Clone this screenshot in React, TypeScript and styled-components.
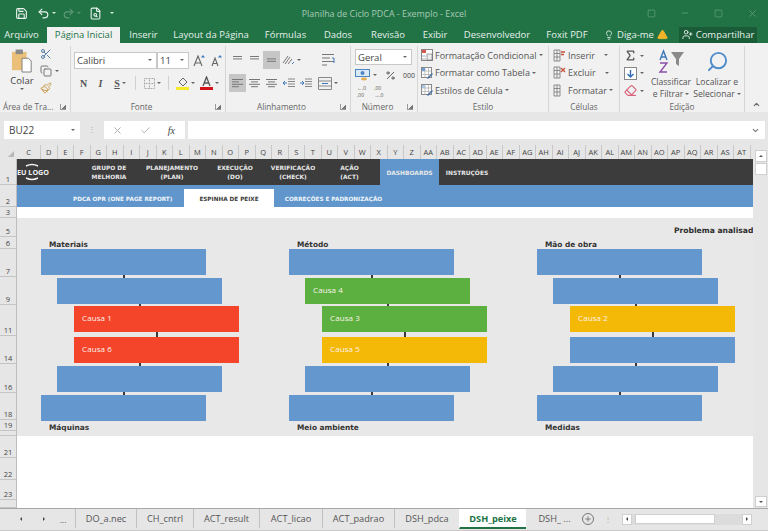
import styled, { createGlobalStyle } from 'styled-components';
import {
  Save, Undo2, Redo2, FileSearch, Scissors, Copy, Paintbrush, ChevronDown, ChevronUp, Lightbulb,
  TriangleAlert, UserPlus, Sigma, Eraser, Search, Check, X, Minus, Square, Plus, Percent,
} from 'lucide-react';

const GlobalStyle = createGlobalStyle`
  html, body { margin: 0; padding: 0; }
  body { font-family: "Open Sans", "Liberation Sans", sans-serif; overflow: hidden; }
`;

const Page = styled.div`
  width: 768px;
  height: 531px;
  display: flex;
  flex-direction: column;
  overflow: hidden;
  background: #e6e6e6;
`;

/* title bar */
const TitleBar = styled.div`
  height: 27px;
  background: #217346;
  display: flex;
  align-items: center;
  position: relative;
  padding-left: 15px;
  color: #eaf3ed;
`;
const QuickIcon = styled.span<{ $w?: number; $dim?: boolean; $ml?: number }>`
  width: ${(p) => p.$w ?? 26}px;
  margin-left: ${(p) => p.$ml ?? 0}px;
  display: flex;
  align-items: center;
  gap: 2px;
  opacity: ${(p) => (p.$dim ? 0.3 : 1)};
`;
const Caret = styled.span<{ $color?: string; $ml?: number }>`
  width: 0;
  height: 0;
  margin-left: ${(p) => p.$ml ?? 0}px;
  border-left: 2px solid transparent;
  border-right: 2px solid transparent;
  border-top: 2px solid ${(p) => p.$color ?? '#666'};
  display: inline-block;
  flex: none;
`;
const Title = styled.div`
  position: absolute;
  left: 0;
  right: 0;
  top: 7px;
  text-align: center;
  font-size: 8.9px;
  line-height: 13px;
  color: #a8c9b5;
`;
const WindowControls = styled.div`
  margin-left: auto;
  display: flex;
  align-items: center;
  color: #5f9d7b;
  gap: 24px;
  padding-right: 10px;
`;

/* ribbon tabs */
const TabRow = styled.div`
  height: 17px;
  background: #217346;
  display: flex;
  align-items: stretch;
  font-size: 9.5px;
  color: #e6f0ea;
  padding-left: 6px;
  white-space: nowrap;
`;
const RibbonTab = styled.div<{ $w: number; $active?: boolean; $ml?: number }>`
  width: ${(p) => p.$w}px;
  margin-left: ${(p) => p.$ml ?? 0}px;
  display: flex;
  align-items: center;
  justify-content: center;
  flex: none;
  background: ${(p) => (p.$active ? '#f1f1f1' : 'transparent')};
  color: ${(p) => (p.$active ? '#217346' : 'inherit')};
`;
const TellMe = styled.div`
  width: 66px;
  flex: none;
  display: flex;
  align-items: center;
  gap: 3px;
  margin-left: 10px;
`;
const Share = styled.div`
  width: 78px;
  margin-left: 9px;
  display: flex;
  align-items: center;
  justify-content: center;
  gap: 3px;
  background: #1a5c38;
`;

/* ribbon */
const Ribbon = styled.div`
  height: 69px;
  background: #f1f1f1;
  display: flex;
  font-size: 9.2px;
  color: #444;
`;
const Group = styled.div<{ $w: number }>`
  width: ${(p) => p.$w}px;
  box-sizing: border-box;
  flex: none;
  display: flex;
  flex-direction: column;
  position: relative;
  margin-top: 3px;
  border-right: 1px solid #d6d6d6;
`;
const GroupBody = styled.div`
  flex: 1;
  display: flex;
  min-height: 0;
`;
const GroupLabel = styled.div<{ $left?: boolean; $launcher?: boolean }>`
  height: 12px;
  line-height: 14px;
  text-align: ${(p) => (p.$left ? 'left' : 'center')};
  padding-left: ${(p) => (p.$left ? 3 : 0)}px;
  padding-right: ${(p) => (p.$launcher ? 13 : 0)}px;
  font-size: 8.2px;
  color: #666;
  white-space: nowrap;
`;
const Launcher = styled.span`
  position: absolute;
  right: 4px;
  bottom: 2px;
  width: 5px;
  height: 5px;
  border-left: 1px solid #999;
  border-bottom: 1px solid #999;
  background: linear-gradient(135deg, transparent 55%, #777 55%);
`;
const PasteBox = styled.div`
  width: 36px;
  flex: none;
  display: flex;
  flex-direction: column;
  align-items: center;
  padding: 3px 0 0 4px;
  font-size: 9.5px;
  line-height: 13px;
  gap: 1px;
`;
const ClipTools = styled.div`
  display: flex;
  flex-direction: column;
  gap: 5px;
  padding-top: 2px;
`;
const Stack = styled.div<{ $gap?: number; $top?: number; $left?: number; $w?: number }>`
  display: flex;
  flex-direction: column;
  flex: ${(p) => (p.$w ? 'none' : '0 1 auto')};
  width: ${(p) => (p.$w ? `${p.$w}px` : 'auto')};
  gap: ${(p) => p.$gap ?? 0}px;
  padding-top: ${(p) => p.$top ?? 0}px;
  padding-left: ${(p) => p.$left ?? 0}px;
  box-sizing: content-box;
`;
const Row = styled.div<{ $gap?: number; $h?: number; $mt?: number }>`
  display: flex;
  align-items: center;
  gap: ${(p) => p.$gap ?? 0}px;
  margin-top: ${(p) => p.$mt ?? 0}px;
  height: ${(p) => (p.$h ? `${p.$h}px` : 'auto')};
`;
const Select = styled.div<{ $w: number; $h?: number }>`
  width: ${(p) => p.$w}px;
  height: ${(p) => p.$h ?? 17}px;
  box-sizing: border-box;
  flex: none;
  background: #fff;
  border: 1px solid #c8c8c8;
  display: flex;
  align-items: center;
  justify-content: space-between;
  padding: 0 4px 0 2px;
  font-size: 9.5px;
  color: #444;
`;
const IconBtn = styled.div<{ $w?: number; $on?: boolean; $ml?: number }>`
  width: ${(p) => p.$w ?? 17}px;
  height: 18px;
  margin-left: ${(p) => p.$ml ?? 0}px;
  flex: none;
  display: flex;
  align-items: center;
  justify-content: center;
  gap: 2px;
  background: ${(p) => (p.$on ? '#c6c6c6' : 'transparent')};
  font-size: 9.5px;
  color: #555;
`;
const BoldLetter = styled.span<{ $italic?: boolean; $under?: boolean }>`
  font-family: "Liberation Serif", serif;
  font-weight: 700;
  font-size: 10px;
  font-style: ${(p) => (p.$italic ? 'italic' : 'normal')};
  text-decoration: ${(p) => (p.$under ? 'underline' : 'none')};
  color: #555;
`;
const ToolSep = styled.span`
  width: 1px;
  height: 14px;
  background: #d0d0d0;
  margin: 0 4px;
`;
const PercentIcon = styled(Percent)`
  margin-left: 5px;
`;
const Thousands = styled.span`
  font-size: 7px;
  margin-left: 4px;
`;
const DecimalRow = styled.div`
  height: 16px;
  display: flex;
  align-items: center;
  gap: 8px;
  padding-left: 2px;
`;
const Decimal = styled.span`
  display: flex;
  flex-direction: column;
  font-size: 5px;
  line-height: 7px;
  color: #555;
`;
const MenuLine = styled.div`
  display: flex;
  align-items: center;
  gap: 2px;
  height: 17.5px;
  white-space: nowrap;
  font-size: 9px;
  color: #555;
`;
const BigTool = styled.div<{ $w: number }>`
  width: ${(p) => p.$w}px;
  flex: none;
  display: flex;
  flex-direction: column;
  align-items: center;
  font-size: 8.6px;
  line-height: 12px;
  padding-top: 2px;
  white-space: nowrap;
  color: #555;
`;
const BigIcon = styled.div`
  height: 27px;
  display: flex;
  align-items: center;
  margin-bottom: 1px;
`;
const LoupeIcon = styled(Search)`
  transform: scaleX(-1);
`;
const Collapse = styled.div`
  flex: 1;
  display: flex;
  align-items: flex-end;
  justify-content: center;
  padding-bottom: 3px;
  color: #666;
`;

/* formula bar */
const FormulaBar = styled.div`
  height: 33px;
  box-sizing: border-box;
  display: flex;
  align-items: flex-start;
  padding: 9px 3px 0 4px;
  background: #e6e6e6;
  font-size: 10px;
  color: #444;
`;
const NameBox = styled.div`
  width: 76px;
  height: 18px;
  box-sizing: border-box;
  background: #fff;
  display: flex;
  align-items: center;
  justify-content: space-between;
  padding: 0 5px;
`;
const Dots = styled.div<{ $w: number }>`
  width: ${(p) => p.$w}px;
  flex: none;
  text-align: center;
  line-height: 16px;
  color: #aaa;
  font-size: 8px;
`;
const FxBox = styled.div`
  width: 81px;
  height: 18px;
  background: #fff;
  display: flex;
  align-items: center;
  justify-content: space-between;
  color: #aaa;
  padding: 0 10px 0 8px;
  box-sizing: border-box;
`;
const Fx = styled.i`
  font-family: "Liberation Serif", serif;
  color: #444;
  font-size: 10px;
`;
const FormulaInput = styled.div`
  flex: 1;
  height: 18px;
  background: #fff;
  margin-left: 3px;
  display: flex;
  align-items: center;
  justify-content: flex-end;
  padding-right: 5px;
  color: #777;
`;

/* grid */
const GridArea = styled.div`
  height: 363px;
  display: flex;
`;
const GridMain = styled.div`
  width: 753px;
  display: flex;
  flex-direction: column;
`;
const ColHeader = styled.div`
  height: 14px;
  display: flex;
  background: #e6e6e6;
  font-size: 7.5px;
  line-height: 15px;
  color: #444;
`;
const Corner = styled.div`
  width: 17px;
  flex: none;
  position: relative;
  &::after {
    content: '';
    position: absolute;
    right: 3px;
    bottom: 2px;
    border-left: 6px solid transparent;
    border-bottom: 6px solid #b8b8b8;
  }
`;
const ColCell = styled.div<{ $w: number }>`
  width: ${(p) => p.$w}px;
  flex: none;
  box-sizing: border-box;
  text-align: center;
  border-right: 1px solid #c8c8c8;
  overflow: hidden;
`;
const GridBody = styled.div`
  flex: 1;
  display: flex;
  min-height: 0;
`;
const RowHeader = styled.div`
  width: 17px;
  flex: none;
  background: #e6e6e6;
  border-right: 1px solid #bdbdbd;
  box-sizing: border-box;
`;
const RowCell = styled.div<{ $h: number }>`
  height: ${(p) => p.$h}px;
  box-sizing: border-box;
  border-bottom: 1px solid #c4c4c4;
  display: flex;
  align-items: flex-end;
  justify-content: center;
  font-size: 7.5px;
  line-height: 10px;
  color: #444;
  overflow: hidden;
`;
const Sheet = styled.div`
  flex: 1;
  min-width: 0;
  background: #fff;
  display: flex;
  flex-direction: column;
  overflow: hidden;
`;
const DarkNav = styled.div`
  height: 26px;
  flex: none;
  background: #3c3c3c;
  display: flex;
  font-family: "DejaVu Sans", sans-serif;
  font-weight: 700;
  font-size: 5.9px;
  line-height: 9px;
  color: #e8e8e8;
  text-align: center;
`;
const Logo = styled.div`
  width: 60px;
  flex: none;
  display: flex;
  flex-direction: column;
  align-items: flex-start;
  justify-content: center;
  font-family: "Open Sans", sans-serif;
  font-size: 7.2px;
  line-height: 10px;
  color: #f2f2f2;
  svg { margin-left: 8px; display: block; }
`;
const NavItem = styled.div<{ $w: number; $active?: boolean }>`
  width: ${(p) => p.$w}px;
  flex: none;
  box-sizing: border-box;
  padding-top: 2px;
  display: flex;
  align-items: center;
  justify-content: center;
  background: ${(p) => (p.$active ? '#6096cc' : 'transparent')};
`;
const SubNav = styled.div`
  height: 22px;
  flex: none;
  background: #6096cc;
  display: flex;
  align-items: flex-end;
  font-family: "DejaVu Sans", sans-serif;
  font-weight: 700;
  font-size: 5.7px;
  color: #eef4fa;
`;
const SubItem = styled.div<{ $w: number; $active?: boolean; $pad?: number }>`
  width: ${(p) => p.$w}px;
  flex: none;
  height: 18px;
  box-sizing: border-box;
  padding-top: 2px;
  display: flex;
  align-items: center;
  justify-content: ${(p) => (p.$pad ? 'flex-start' : 'center')};
  padding-left: ${(p) => p.$pad ?? 0}px;
  background: ${(p) => (p.$active ? '#fff' : 'transparent')};
  color: ${(p) => (p.$active ? '#3c3c3c' : 'inherit')};
  white-space: nowrap;
`;
const Spacer = styled.div<{ $h: number }>`
  height: ${(p) => p.$h}px;
  flex: none;
`;
const Panel = styled.div`
  height: 218px;
  flex: none;
  background: #e8e8e8;
  display: flex;
  flex-direction: column;
  font-family: "DejaVu Sans", sans-serif;
  font-weight: 700;
  font-size: 7.4px;
  color: #333;
`;
const Problem = styled.div`
  height: 19px;
  padding: 7px 0 0 657px;
  box-sizing: border-box;
  font-size: 7.6px;
  line-height: 11px;
  white-space: nowrap;
  color: #2e2e2e;
`;
const Fishbone = styled.div`
  display: grid;
  grid-template-columns: repeat(3, 248px);
  padding-left: 24px;
`;
const Branch = styled.div`
  display: flex;
  flex-direction: column;
`;
const BranchLabel = styled.div<{ $h: number; $lh: number }>`
  height: ${(p) => p.$h}px;
  line-height: ${(p) => p.$lh}px;
  padding-left: 8px;
`;
const Bars = styled.div`
  display: flex;
  flex-direction: column;
`;
const Bar = styled.div<{ $indent: number; $color: string; $link: 'up' | 'down' | 'none'; $space: number }>`
  position: relative;
  width: 165px;
  height: 26px;
  margin-left: ${(p) => p.$indent}px;
  margin-top: ${(p) => p.$space}px;
  background: ${(p) => p.$color};
  color: #fdf2ea;
  font-family: "Open Sans", sans-serif;
  font-weight: 400;
  font-size: 8px;
  letter-spacing: 0.1px;
  line-height: 24px;
  padding-left: 8px;
  box-sizing: border-box;
  &::after {
    content: '';
    display: ${(p) => (p.$link === 'none' ? 'none' : 'block')};
    position: absolute;
    left: 81.5px;
    width: 2px;
    height: ${(p) => (p.$space > 3 && p.$link === 'up' ? 5 : 3)}px;
    background: #3a3a3a;
    ${(p) => (p.$link === 'down' ? 'top: 26px;' : 'bottom: 26px;')}
  }
`;

/* vertical scrollbar */
const VScroll = styled.div`
  width: 15px;
  flex: none;
  background: #e6e6e6;
  display: flex;
  flex-direction: column;
  align-items: center;
  justify-content: space-between;
  padding: 5px 0 1px;
  box-sizing: border-box;
`;
const ScrollButton = styled.div<{ $w?: number; $h?: number; $end?: boolean }>`
  width: ${(p) => p.$w ?? 10}px;
  height: ${(p) => p.$h ?? 10}px;
  margin-left: ${(p) => (p.$end ? 'auto' : '0')};
  background: #fff;
  border: 1px solid #cfcfcf;
  box-sizing: border-box;
  display: flex;
  align-items: center;
  justify-content: center;
  flex: none;
`;
const Arrow = styled.span<{ $dir: 'up' | 'down' | 'left' | 'right' }>`
  width: 0;
  height: 0;
  border: 2.5px solid transparent;
  ${(p) =>
    p.$dir === 'up'
      ? 'border-bottom-color: #555; margin-top: -2px;'
      : p.$dir === 'down'
        ? 'border-top-color: #555; margin-top: 2px;'
        : p.$dir === 'left'
          ? 'border-right-color: #444; margin-left: -2px;'
          : 'border-left-color: #444; margin-left: 2px;'}
`;
const VThumb = styled.div`
  width: 12px;
  height: 12px;
  background: #fff;
  border: 1px solid #d0d0d0;
  box-sizing: border-box;
  margin-top: 1px;
  margin-bottom: auto;
`;

/* sheet tabs */
const SheetTabs = styled.div`
  flex: 1;
  border-top: 1px solid #a8a8a8;
  display: flex;
  align-items: center;
  font-size: 9.2px;
  color: #555;
  padding-left: 16px;
  padding-bottom: 1px;
  border-bottom: 1px solid #c8c8c8;
`;
const NavArrow = styled.div`
  width: 21px;
  display: flex;
  justify-content: flex-start;
  padding-left: 4px;
  box-sizing: border-box;
  flex: none;
`;
const More = styled.div`
  width: 15px;
  margin-left: 2px;
  flex: none;
  font-size: 8px;
  color: #444;
`;
const SheetTab = styled.div<{ $w: number; $active?: boolean; $plain?: boolean }>`
  width: ${(p) => p.$w}px;
  height: 20px;
  flex: none;
  box-sizing: border-box;
  display: flex;
  align-items: center;
  justify-content: center;
  border-left: 1px solid ${(p) => (p.$active || p.$plain ? 'transparent' : '#c0c0c0')};
  background: ${(p) => (p.$active ? '#fff' : 'transparent')};
  color: ${(p) => (p.$active ? '#217346' : 'inherit')};
  font-weight: ${(p) => (p.$active ? 700 : 400)};
  border-bottom: 2px solid ${(p) => (p.$active ? '#217346' : 'transparent')};
`;
const AddSheet = styled.div`
  width: 12px;
  height: 12px;
  box-sizing: border-box;
  border: 1px solid #777;
  border-radius: 50%;
  display: flex;
  align-items: center;
  justify-content: center;
  color: #555;
  flex: none;
`;
const HScroll = styled.div`
  width: 130px;
  height: 11px;
  flex: none;
  display: flex;
  align-items: center;
  background: #dcdcdc;
`;
const HThumb = styled.div`
  width: 80px;
  height: 10px;
  margin-left: 3px;
  background: #fff;
  border: 1px solid #d0d0d0;
  box-sizing: border-box;
`;

/* small office style drawings */
const PasteIcon = () => (
  <svg width="22" height="24" viewBox="0 0 24 26">
    <rect x="1" y="3" width="16" height="20" fill="#e9bf7a" />
    <rect x="5" y="0.5" width="8" height="5" fill="#8a8a8a" />
    <path d="M12 10h7l3 3v12H12z" fill="#fff" stroke="#777" />
  </svg>
);
const SheetIcon = ({ accent = '#6a9fd8' }: { accent?: string }) => (
  <svg width="12" height="12" viewBox="0 0 12 12">
    <rect x="0.5" y="0.5" width="10" height="10" fill="#fff" stroke="#888" />
    <path d="M0.5 4h10M0.5 7.5h10M4 0.5v10M7.5 0.5v10" stroke="#aaa" strokeWidth="0.7" />
    <rect x="1" y="1" width="3" height="3" fill={accent} />
    <path d="M6 11l5-5 1 1-5 5z" fill="#4472a8" />
  </svg>
);
const CondIcon = () => (
  <svg width="12" height="12" viewBox="0 0 12 12">
    <rect x="0.5" y="0.5" width="11" height="11" fill="#fff" stroke="#888" />
    <rect x="1" y="1" width="4" height="3" fill="#d65a4a" />
    <rect x="6" y="5" width="5" height="6" fill="#eee" stroke="#666" strokeWidth="0.6" />
    <path d="M1 7h4M1 10h4" stroke="#999" strokeWidth="0.8" />
  </svg>
);
const CellsIcon = ({ mark }: { mark: string }) => (
  <svg width="13" height="13" viewBox="0 0 13 13">
    <path d="M1 1h6v11H1zM1 4.5h6M1 8h6M4 1v11" fill="none" stroke="#777" strokeWidth="0.8" />
    <path d={mark} fill="none" stroke="#c8543f" strokeWidth="1.3" />
  </svg>
);
const LinesIcon = ({ widths, on }: { widths: number[]; on?: boolean }) => (
  <svg width="11" height="10" viewBox="0 0 11 10">
    {widths.map((w, i) => (
      <rect key={i} x={on ? 0 : (11 - w) / 2} y={i * 2.4 + 1} width={w} height="1" fill="#777" />
    ))}
  </svg>
);
const IndentIcon = ({ dir }: { dir: 'in' | 'out' }) => (
  <svg width="12" height="10" viewBox="0 0 12 10">
    <path d="M5 1h7M5 3.5h7M5 6h7M5 8.5h7" stroke="#888" />
    <path d={dir === 'in' ? 'M0 5h3M2 3l2 2-2 2' : 'M4 5H1M2 3L0 5l2 2'} stroke="#3c78b8" fill="none" />
  </svg>
);
const BorderIcon = () => (
  <svg width="11" height="11" viewBox="0 0 11 11">
    <path d="M0.5 0.5h10v10h-10zM5.5 0.5v10M0.5 5.5h10" fill="none" stroke="#aaa" strokeDasharray="1 0.5" />
  </svg>
);
const FillIcon = () => (
  <svg width="13" height="14" viewBox="0 0 13 14">
    <path d="M3 6l4-4 4 4-4 4z" fill="#eee" stroke="#666" />
    <rect x="0" y="11" width="13" height="3" fill="#f4ea2a" />
  </svg>
);
const FontColorIcon = () => (
  <svg width="13" height="14" viewBox="0 0 13 14">
    <path d="M3 10L6.5 1 10 10M4.5 7h4" fill="none" stroke="#555" strokeWidth="1.3" />
    <rect x="0" y="11" width="13" height="3" fill="#d3121a" />
  </svg>
);
const GrowIcon = ({ size }: { size: number }) => (
  <svg width="13" height="13" viewBox="0 0 13 13">
    <path d={size > 1 ? 'M1 12L5 2l4 10M2.5 9h5' : 'M2 12l3-8 3 8M3 9.5h4'} fill="none" stroke="#666" strokeWidth="1.1" />
    <path d="M10 1l2 2.4H8z" fill="#3c78b8" />
  </svg>
);
const OrientIcon = () => (
  <svg width="14" height="12" viewBox="0 0 14 12">
    <path d="M2 9l5-7M4 10l5-7M7 10l4-5" stroke="#777" fill="none" />
    <path d="M11 10l2-2" stroke="#3c78b8" />
  </svg>
);
const WrapIcon = () => (
  <svg width="14" height="14" viewBox="0 0 14 14">
    <path d="M1 1.5h12M1 5h8M1 8.5h12M1 12h5" stroke="#777" />
    <path d="M11 5h2v5" stroke="#3c78b8" fill="none" />
  </svg>
);
const MergeIcon = () => (
  <svg width="14" height="13" viewBox="0 0 14 13">
    <path d="M0.5 0.5h13v12h-13zM0.5 4h13M0.5 9h13" fill="none" stroke="#888" />
    <path d="M4 6.5h6" stroke="#3c78b8" />
  </svg>
);
const AccountIcon = () => (
  <svg width="15" height="12" viewBox="0 0 15 12">
    <rect x="0.5" y="0.5" width="14" height="7" fill="#dceaf7" stroke="#4b87c5" />
    <circle cx="7.5" cy="4" r="2" fill="#4b87c5" />
    <ellipse cx="9" cy="10" rx="3" ry="1.4" fill="#e0b050" />
  </svg>
);
const SortIcon = () => (
  <svg width="27" height="25" viewBox="0 0 27 25">
    <path d="M13 3h13l-5 7v7l-3-2v-5z" fill="#8a8a8a" />
    <path d="M2 11L5.5 2 9 11M3 8h5" fill="none" stroke="#3c78b8" strokeWidth="1.4" />
    <path d="M2 14h7l-7 9h7" fill="none" stroke="#8a4ea8" strokeWidth="1.4" />
  </svg>
);
const FillDownIcon = () => (
  <svg width="13" height="13" viewBox="0 0 13 13">
    <rect x="0.5" y="0.5" width="12" height="12" fill="#fff" stroke="#888" />
    <path d="M6.5 3v7M3.5 7l3 3 3-3" fill="none" stroke="#2f6db5" strokeWidth="1.4" />
  </svg>
);
const LogoArc = ({ flip }: { flip?: boolean }) => (
  <svg width="14" height="4" viewBox="0 0 14 4">
    <path d={flip ? 'M1 1q6 3 12 0' : 'M1 3q6-3 12 0'} fill="none" stroke="#f2f2f2" strokeWidth="1.4" />
  </svg>
);

const columns = [
  'C', 'D', 'E', 'F', 'G', 'H', 'I', 'J', 'K', 'L', 'M', 'N', 'O', 'P', 'Q', 'R', 'S', 'T', 'U', 'V', 'W', 'X',
  'Y', 'Z', 'AA', 'AB', 'AC', 'AD', 'AE', 'AF', 'AG', 'AH', 'AI', 'AJ', 'AK', 'AL', 'AM', 'AN', 'AO', 'AP', 'AQ',
  'AR', 'AS', 'AT',
];

const rows: [string, number][] = [
  ['1', 26], ['2', 22], ['3', 11], ['5', 19], ['6', 12], ['7', 28], ['9', 28], ['11', 31], ['14', 28], ['16', 29],
  ['18', 27], ['19', 11], ['', 5], ['21', 22], ['22', 22], ['23', 20], ['', 8],
];

const BLUE = '#6497cd';
const RED = '#f4452b';
const GREEN = '#5bb040';
const AMBER = '#f4b807';

const indents = [0, 16, 33, 33, 16, 0];
const links: ('down' | 'up')[] = ['down', 'down', 'down', 'up', 'up', 'up'];
const spaces = [0, 2.7, 2.7, 5, 2.7, 2.7];

const branches = [
  {
    top: 'Materiais',
    bottom: 'Máquinas',
    bars: [
      { color: BLUE }, { color: BLUE }, { color: RED, text: 'Causa 1' },
      { color: RED, text: 'Causa 6' }, { color: BLUE }, { color: BLUE },
    ],
  },
  {
    top: 'Método',
    bottom: 'Meio ambiente',
    bars: [
      { color: BLUE }, { color: GREEN, text: 'Causa 4' }, { color: GREEN, text: 'Causa 3' },
      { color: AMBER, text: 'Causa 5' }, { color: BLUE }, { color: BLUE },
    ],
  },
  {
    top: 'Mão de obra',
    bottom: 'Medidas',
    bars: [
      { color: BLUE }, { color: BLUE }, { color: AMBER, text: 'Causa 2' },
      { color: BLUE }, { color: BLUE }, { color: BLUE },
    ],
  },
];

const sheets = [
  { name: 'DO_a.nec', w: 61 },
  { name: 'CH_cntrl', w: 57 },
  { name: 'ACT_result', w: 66 },
  { name: 'ACT_licao', w: 63 },
  { name: 'ACT_padrao', w: 72 },
  { name: 'DSH_pdca', w: 65 },
];

export default function App() {
  return (
    <Page>
      <GlobalStyle />
      <TitleBar>
        <QuickIcon $w={13}><Save size={13} /></QuickIcon>
        <QuickIcon $w={25} $ml={9}><Undo2 size={13} /><Caret $color="#dfeae3" /></QuickIcon>
        <QuickIcon $w={27} $dim><Redo2 size={13} /><Caret $color="#dfeae3" /></QuickIcon>
        <QuickIcon $w={21}><FileSearch size={13} /></QuickIcon>
        <QuickIcon $w={10}><Caret $color="#dfeae3" /></QuickIcon>
        <Title>Planilha de Ciclo PDCA - Exemplo - Excel</Title>
        <WindowControls>
          <Square size={9} />
          <Minus size={10} />
          <Square size={9} />
          <X size={11} />
        </WindowControls>
      </TitleBar>

      <TabRow>
        <RibbonTab $w={31}>Arquivo</RibbonTab>
        <RibbonTab $w={73} $active $ml={10}>Página Inicial</RibbonTab>
        <RibbonTab $w={47}>Inserir</RibbonTab>
        <RibbonTab $w={88}>Layout da Página</RibbonTab>
        <RibbonTab $w={61}>Fórmulas</RibbonTab>
        <RibbonTab $w={44}>Dados</RibbonTab>
        <RibbonTab $w={56}>Revisão</RibbonTab>
        <RibbonTab $w={38}>Exibir</RibbonTab>
        <RibbonTab $w={86}>Desenvolvedor</RibbonTab>
        <RibbonTab $w={54}>Foxit PDF</RibbonTab>
        <TellMe>
          <Lightbulb size={10} />
          <span>Diga-me</span>
          <TriangleAlert size={11} fill="#f0b429" color="#f0b429" />
        </TellMe>
        <Share><UserPlus size={11} />Compartilhar</Share>
      </TabRow>

      <Ribbon>
        <Group $w={71}>
          <GroupBody>
            <PasteBox>
              <PasteIcon />
              <span>Colar</span>
              <Caret />
            </PasteBox>
            <ClipTools>
              <Scissors size={12} color="#5a7fa8" />
              <Row $gap={3}><Copy size={12} color="#777" /><Caret /></Row>
              <Paintbrush size={12} color="#c89a4a" />
            </ClipTools>
          </GroupBody>
          <GroupLabel $left>Área de Tra...</GroupLabel>
          <Launcher />
        </Group>

        <Group $w={155}>
          <GroupBody>
            <Stack $top={5} $left={3} $gap={5}>
              <Row>
                <Select $w={83}>Calibri<Caret /></Select>
                <Select $w={32}>11<Caret /></Select>
                <IconBtn $ml={2}><GrowIcon size={2} /></IconBtn>
                <IconBtn><GrowIcon size={1} /></IconBtn>
              </Row>
              <Row>
                <IconBtn $ml={1}><BoldLetter>N</BoldLetter></IconBtn>
                <IconBtn><BoldLetter $italic>I</BoldLetter></IconBtn>
                <IconBtn $w={22}><BoldLetter $under>S</BoldLetter><Caret /></IconBtn>
                <ToolSep />
                <IconBtn $w={24}><BorderIcon /><Caret /></IconBtn>
                <ToolSep />
                <IconBtn $w={24}><FillIcon /><Caret /></IconBtn>
                <IconBtn $w={24}><FontColorIcon /><Caret /></IconBtn>
              </Row>
            </Stack>
          </GroupBody>
          <GroupLabel $launcher>Fonte</GroupLabel>
          <Launcher />
        </Group>

        <Group $w={125}>
          <GroupBody>
            <Stack $top={5} $left={3} $gap={5}>
              <Row>
                <IconBtn><LinesIcon widths={[9, 9]} /></IconBtn>
                <IconBtn><LinesIcon widths={[9, 9]} /></IconBtn>
                <IconBtn $on><LinesIcon widths={[0, 9, 9]} /></IconBtn>
                <IconBtn $w={22}><OrientIcon /><Caret /></IconBtn>
                <IconBtn $w={24} $ml={14}><WrapIcon /></IconBtn>
              </Row>
              <Row>
                <IconBtn $on><LinesIcon widths={[11, 7, 11, 7]} on /></IconBtn>
                <IconBtn><LinesIcon widths={[11, 7, 11, 7]} /></IconBtn>
                <IconBtn><LinesIcon widths={[11, 7, 11, 7]} /></IconBtn>
                <IconBtn><IndentIcon dir="out" /></IconBtn>
                <IconBtn><IndentIcon dir="in" /></IconBtn>
                <IconBtn $w={24} $ml={2}><MergeIcon /><Caret /></IconBtn>
              </Row>
            </Stack>
          </GroupBody>
          <GroupLabel $launcher>Alinhamento</GroupLabel>
          <Launcher />
        </Group>

        <Group $w={67}>
          <GroupBody>
            <Stack $top={3} $left={4}>
              <Select $w={57} $h={16}>Geral<Caret /></Select>
              <Row $h={18} $gap={3} $mt={1}>
                <AccountIcon /><Caret />
                <PercentIcon size={11} color="#555" />
                <Thousands>000</Thousands>
              </Row>
              <DecimalRow>
                <Decimal><span>←,0</span><span>,00</span></Decimal>
                <Decimal><span>,00</span><span>→,0</span></Decimal>
              </DecimalRow>
            </Stack>
          </GroupBody>
          <GroupLabel $launcher>Número</GroupLabel>
          <Launcher />
        </Group>

        <Group $w={131}>
          <GroupBody>
            <Stack $left={3}>
              <MenuLine><CondIcon />Formatação Condicional<Caret /></MenuLine>
              <MenuLine><SheetIcon />Formatar como Tabela<Caret /></MenuLine>
              <MenuLine><SheetIcon accent="#a8c4e4" />Estilos de Célula<Caret /></MenuLine>
            </Stack>
          </GroupBody>
          <GroupLabel>Estilo</GroupLabel>
        </Group>

        <Group $w={71}>
          <GroupBody>
            <Stack $left={4}>
              <MenuLine><CellsIcon mark="M8 3h4M8 5.5h3" />Inserir<Caret $ml={7} /></MenuLine>
              <MenuLine><CellsIcon mark="M8 2l4 4M12 2L8 6" />Excluir<Caret $ml={7} /></MenuLine>
              <MenuLine><CellsIcon mark="" />Formatar<Caret /></MenuLine>
            </Stack>
          </GroupBody>
          <GroupLabel>Células</GroupLabel>
        </Group>

        <Group $w={125}>
          <GroupBody>
            <Stack $top={1} $left={4} $w={26}>
              <Row $h={17} $gap={3}><Sigma size={13} color="#555" strokeWidth={2.5} /><Caret /></Row>
              <Row $h={18} $gap={3}><FillDownIcon /><Caret /></Row>
              <Row $h={17} $gap={3}><Eraser size={13} color="#d8607a" /><Caret /></Row>
            </Stack>
            <BigTool $w={42}>
              <BigIcon><SortIcon /></BigIcon>
              <span>Classificar</span>
              <Row $gap={2}>e Filtrar<Caret /></Row>
            </BigTool>
            <BigTool $w={50}>
              <BigIcon><LoupeIcon size={23} color="#4f8cc9" /></BigIcon>
              <span>Localizar e</span>
              <Row $gap={2}>Selecionar<Caret /></Row>
            </BigTool>
          </GroupBody>
          <GroupLabel>Edição</GroupLabel>
        </Group>

        <Collapse><ChevronUp size={9} strokeWidth={3} /></Collapse>
      </Ribbon>

      <FormulaBar>
        <NameBox>BU22<Caret /></NameBox>
        <Dots $w={24}>⋮</Dots>
        <FxBox>
          <X size={11} />
          <Check size={11} />
          <Fx>fx</Fx>
        </FxBox>
        <FormulaInput><ChevronDown size={9} strokeWidth={3} /></FormulaInput>
      </FormulaBar>

      <GridArea>
        <GridMain>
          <ColHeader>
            <Corner />
            {columns.map((c, i) => (
              <ColCell key={c} $w={i === 0 ? 24 : 16.5}>{c}</ColCell>
            ))}
          </ColHeader>
          <GridBody>
            <RowHeader>
              {rows.map(([label, h], i) => (
                <RowCell key={i} $h={h}>{label}</RowCell>
              ))}
            </RowHeader>
            <Sheet>
              <DarkNav>
                <Logo>
                  <LogoArc />
                  <span>EU LOGO</span>
                  <LogoArc flip />
                </Logo>
                <NavItem $w={64}>GRUPO DE<br />MELHORIA</NavItem>
                <NavItem $w={62}>PLANEJAMENTO<br />(PLAN)</NavItem>
                <NavItem $w={64}>EXECUÇÃO<br />(DO)</NavItem>
                <NavItem $w={52}>VERIFICAÇÃO<br />(CHECK)</NavItem>
                <NavItem $w={61}>AÇÃO<br />(ACT)</NavItem>
                <NavItem $w={59} $active>DASHBOARDS</NavItem>
                <NavItem $w={56}>INSTRUÇÕES</NavItem>
              </DarkNav>
              <SubNav>
                <SubItem $w={167} $pad={56}>PDCA OPR (ONE PAGE REPORT)</SubItem>
                <SubItem $w={90} $active>ESPINHA DE PEIXE</SubItem>
                <SubItem $w={119}>CORREÇÕES E PADRONIZAÇÃO</SubItem>
              </SubNav>
              <Spacer $h={11} />
              <Panel>
                <Problem>Problema analisado</Problem>
                <Fishbone>
                  {branches.map((b) => (
                    <Branch key={b.top}>
                      <BranchLabel $h={12} $lh={15}>{b.top}</BranchLabel>
                      <Bars>
                        {b.bars.map((bar, i) => (
                          <Bar
                            key={i}
                            $indent={indents[i]}
                            $color={bar.color}
                            $link={links[i]}
                            $space={spaces[i]}
                          >
                            {bar.text}
                          </Bar>
                        ))}
                      </Bars>
                      <BranchLabel $h={13} $lh={13}>{b.bottom}</BranchLabel>
                    </Branch>
                  ))}
                </Fishbone>
              </Panel>
            </Sheet>
          </GridBody>
        </GridMain>
        <VScroll>
          <ScrollButton $w={12} $h={12}><Arrow $dir="up" /></ScrollButton>
          <VThumb />
          <ScrollButton $w={12} $h={11}><Arrow $dir="down" /></ScrollButton>
        </VScroll>
      </GridArea>

      <SheetTabs>
        <NavArrow><Arrow $dir="left" /></NavArrow>
        <NavArrow><Arrow $dir="right" /></NavArrow>
        <More>...</More>
        {sheets.map((s) => (
          <SheetTab key={s.name} $w={s.w}>{s.name}</SheetTab>
        ))}
        <SheetTab $w={67} $active>DSH_peixe</SheetTab>
        <SheetTab $w={56} $plain>DSH_ ...</SheetTab>
        <AddSheet><Plus size={8} /></AddSheet>
        <Dots $w={28}>⋮</Dots>
        <HScroll>
          <ScrollButton $w={10} $h={11}><Arrow $dir="left" /></ScrollButton>
          <HThumb />
          <ScrollButton $w={10} $h={11} $end><Arrow $dir="right" /></ScrollButton>
        </HScroll>
      </SheetTabs>
    </Page>
  );
}
